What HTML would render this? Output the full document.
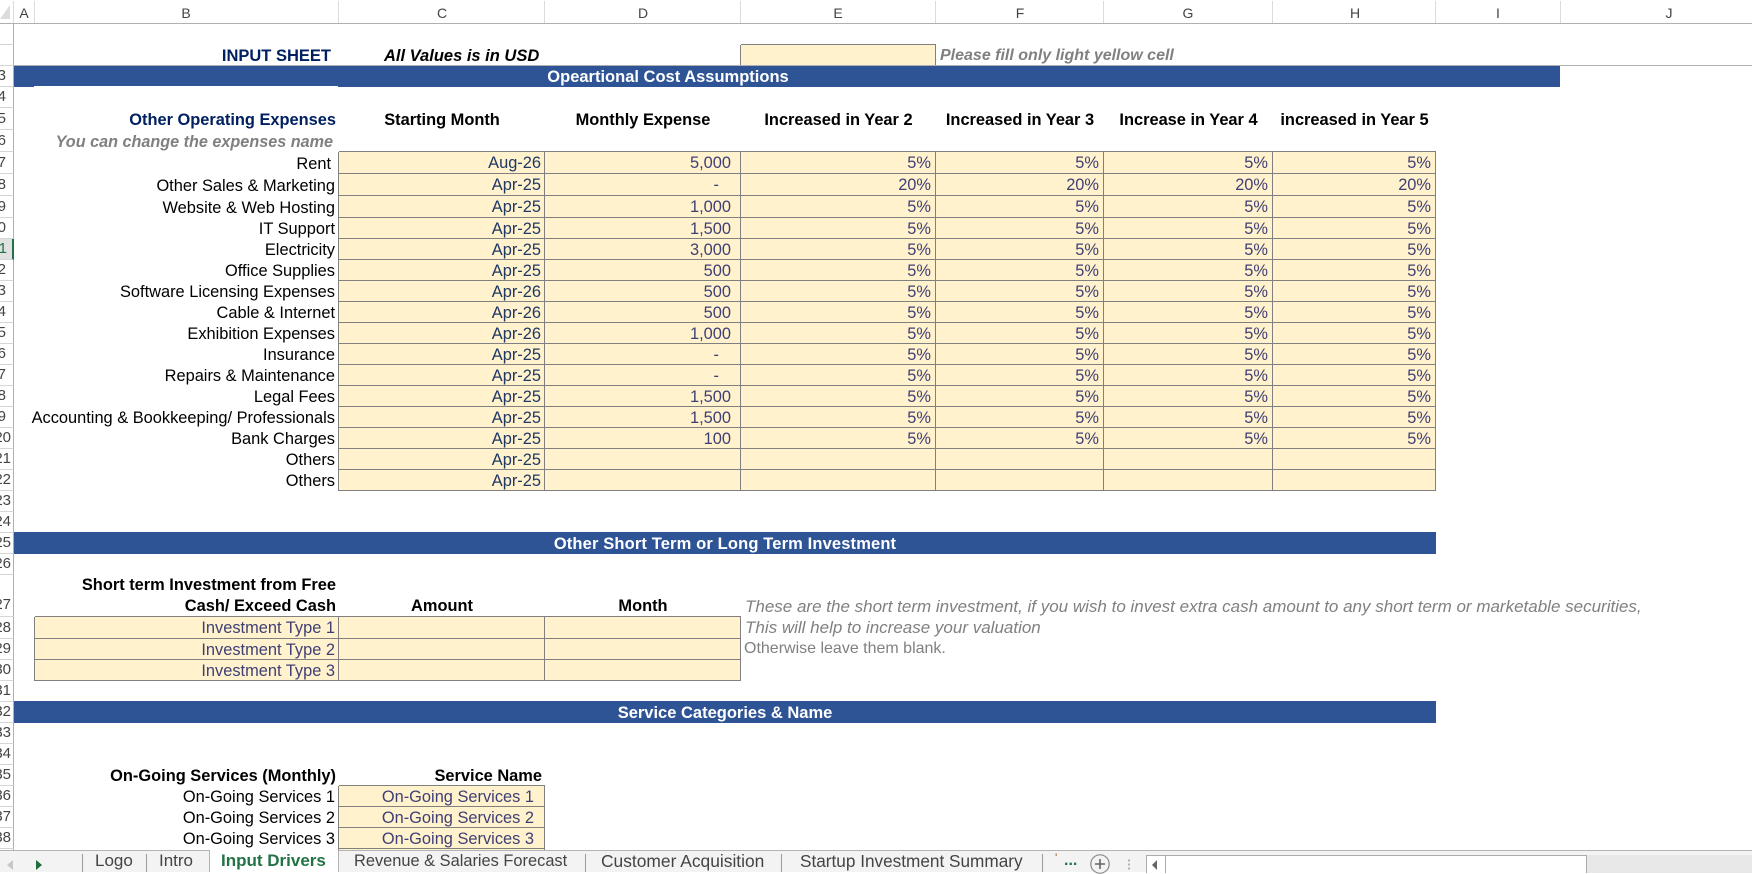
<!DOCTYPE html>
<html><head><meta charset="utf-8"><title>Input Drivers</title>
<style>
html,body{margin:0;padding:0;background:#fff}
body{width:1752px;height:872px;overflow:hidden;position:relative;font-family:"Liberation Sans",Arial,sans-serif;font-size:16.4px;color:#000}
table{position:absolute;left:0;top:24px;border-collapse:separate;border-spacing:0;table-layout:fixed;width:1752px}
td{padding:1px 3px 0 0;white-space:nowrap;box-sizing:border-box;vertical-align:middle;line-height:18px;text-align:right}
td.n{font-size:15px;color:#444;border-right:1px solid #b0b0b0;border-bottom:1px solid #d6d6d6;padding-right:8px;padding-top:0;overflow:hidden;direction:rtl}
td.m{padding-right:3px}
td.y{background:#fff2cc;border-right:1px solid #808080;border-bottom:1px solid #808080;color:#3f3f76}
td.d{color:#1f3864}
td.v{padding-right:9px}
td.p{padding-right:4px}
td.r{border-right:1px solid #808080}
td.t{border-bottom:1px solid #808080}
td.c{text-align:center;padding-right:0}
td.w{padding-top:0;line-height:20.5px;vertical-align:bottom}
.a{position:absolute;white-space:nowrap}
.bar{position:absolute;background:#2f5496}
.ttl{position:absolute;color:#fff;font-weight:bold;white-space:nowrap;transform:translateX(-50%);line-height:22px;padding-top:1px;font-size:16.5px}
.note{position:absolute;white-space:nowrap;color:#808080;line-height:18px;font-size:17px}
#ch{position:absolute;left:0;top:0;width:1752px;height:23px;background:#fff;border-bottom:1px solid #b0b0b0;box-sizing:content-box;z-index:3}
#ch span{position:absolute;top:4px;font-size:14px;color:#444;line-height:18px;transform:translateX(-50%)}
#ch i{position:absolute;top:1px;width:1px;height:22px;background:#dcdcdc}
#tabs{position:absolute;left:0;top:850px;width:1752px;height:22px;background:#f3f3f3;border-top:1px solid #b3b3b3;box-sizing:border-box;z-index:4;font-size:17px;color:#444;line-height:20px}
#tabs span{position:absolute;top:0;white-space:nowrap}
#tabs i{position:absolute;top:3px;width:1px;height:18px;background:#9a9a9a}
</style></head><body>
<div id="ch">
<svg style="position:absolute;left:0;top:4px" width="11" height="17"><path d="M10 1V15H0Z" fill="#dcdcdc"/></svg>
<i style="left:13px"></i><i style="left:34px"></i><i style="left:338px"></i><i style="left:544px"></i><i style="left:740px"></i><i style="left:935px"></i><i style="left:1103px"></i><i style="left:1272px"></i><i style="left:1435px"></i><i style="left:1560px"></i>
<span style="left:24px">A</span><span style="left:186px">B</span><span style="left:442px">C</span><span style="left:643px">D</span><span style="left:838px">E</span><span style="left:1020px">F</span><span style="left:1188px">G</span><span style="left:1355px">H</span><span style="left:1498px">I</span><span style="left:1669px">J</span>
</div>
<table>
<colgroup><col style="width:14px"><col style="width:21px"><col style="width:304px"><col style="width:206px"><col style="width:196px"><col style="width:195px"><col style="width:168px"><col style="width:169px"><col style="width:163px"><col style="width:124px"><col style="width:192px"></colgroup>
<tr style="height:21px"><td class="n"></td><td></td><td></td><td></td><td></td><td class="t"></td><td></td><td></td><td></td><td></td><td></td></tr>
<tr style="height:21px"><td class="n"></td><td></td><td style="padding-right:8px;color:#002060;font-size:16.5px"><b>INPUT SHEET</b></td><td style="text-align:left;padding-left:45px;font-size:16.5px"><b><i>All Values is in USD</i></b></td><td class="r"></td><td class="y"></td><td style="text-align:left;padding-left:4px;color:#808080;font-size:16px"><b><i>Please fill only light yellow cell</i></b></td><td></td><td></td><td></td><td></td></tr>
<tr style="height:21px"><td class="n">3</td><td colspan="10"></td></tr>
<tr style="height:21px"><td class="n">4</td><td colspan="10"></td></tr>
<tr style="height:22px"><td class="n">5</td><td></td><td style="color:#002060"><b>Other Operating Expenses</b></td><td class="c"><b>Starting Month</b></td><td class="c"><b>Monthly Expense</b></td><td class="c"><b>Increased in Year 2</b></td><td class="c"><b>Increased in Year 3</b></td><td class="c"><b>Increase in Year 4</b></td><td class="c"><b>increased in Year 5</b></td><td></td><td></td></tr>
<tr style="height:22px"><td class="n">6</td><td></td><td style="padding-right:6px;color:#808080;font-size:16.2px"><b><i>You can change the expenses name</i></b></td><td class="t"></td><td class="t"></td><td class="t"></td><td class="t"></td><td class="t"></td><td class="t"></td><td></td><td></td></tr>
<tr style="height:22px"><td class="n">7</td><td></td><td class="r" style="padding-right:7px">Rent</td><td class="y d">Aug-26</td><td class="y v">5,000</td><td class="y p">5%</td><td class="y p">5%</td><td class="y p">5%</td><td class="y p">5%</td><td></td><td></td></tr>
<tr style="height:22px"><td class="n">8</td><td></td><td class="r">Other Sales &amp; Marketing</td><td class="y d">Apr-25</td><td class="y v" style="padding-right:21px">-</td><td class="y p">20%</td><td class="y p">20%</td><td class="y p">20%</td><td class="y p">20%</td><td></td><td></td></tr>
<tr style="height:22px"><td class="n">9</td><td></td><td class="r">Website &amp; Web Hosting</td><td class="y d">Apr-25</td><td class="y v">1,000</td><td class="y p">5%</td><td class="y p">5%</td><td class="y p">5%</td><td class="y p">5%</td><td></td><td></td></tr>
<tr style="height:21px"><td class="n">10</td><td></td><td class="r">IT Support</td><td class="y d">Apr-25</td><td class="y v">1,500</td><td class="y p">5%</td><td class="y p">5%</td><td class="y p">5%</td><td class="y p">5%</td><td></td><td></td></tr>
<tr style="height:21px"><td class="n" style="background:#e1e1e1;color:#217346;border-right:2px solid #217346;padding-right:7px">11</td><td></td><td class="r">Electricity</td><td class="y d">Apr-25</td><td class="y v">3,000</td><td class="y p">5%</td><td class="y p">5%</td><td class="y p">5%</td><td class="y p">5%</td><td></td><td></td></tr>
<tr style="height:21px"><td class="n">12</td><td></td><td class="r">Office Supplies</td><td class="y d">Apr-25</td><td class="y v">500</td><td class="y p">5%</td><td class="y p">5%</td><td class="y p">5%</td><td class="y p">5%</td><td></td><td></td></tr>
<tr style="height:21px"><td class="n">13</td><td></td><td class="r">Software Licensing Expenses</td><td class="y d">Apr-26</td><td class="y v">500</td><td class="y p">5%</td><td class="y p">5%</td><td class="y p">5%</td><td class="y p">5%</td><td></td><td></td></tr>
<tr style="height:21px"><td class="n">14</td><td></td><td class="r">Cable &amp; Internet</td><td class="y d">Apr-26</td><td class="y v">500</td><td class="y p">5%</td><td class="y p">5%</td><td class="y p">5%</td><td class="y p">5%</td><td></td><td></td></tr>
<tr style="height:21px"><td class="n">15</td><td></td><td class="r">Exhibition Expenses</td><td class="y d">Apr-26</td><td class="y v">1,000</td><td class="y p">5%</td><td class="y p">5%</td><td class="y p">5%</td><td class="y p">5%</td><td></td><td></td></tr>
<tr style="height:21px"><td class="n">16</td><td></td><td class="r">Insurance</td><td class="y d">Apr-25</td><td class="y v" style="padding-right:21px">-</td><td class="y p">5%</td><td class="y p">5%</td><td class="y p">5%</td><td class="y p">5%</td><td></td><td></td></tr>
<tr style="height:21px"><td class="n">17</td><td></td><td class="r">Repairs &amp; Maintenance</td><td class="y d">Apr-25</td><td class="y v" style="padding-right:21px">-</td><td class="y p">5%</td><td class="y p">5%</td><td class="y p">5%</td><td class="y p">5%</td><td></td><td></td></tr>
<tr style="height:21px"><td class="n">18</td><td></td><td class="r">Legal Fees</td><td class="y d">Apr-25</td><td class="y v">1,500</td><td class="y p">5%</td><td class="y p">5%</td><td class="y p">5%</td><td class="y p">5%</td><td></td><td></td></tr>
<tr style="height:21px"><td class="n">19</td><td></td><td class="r"><span style="display:inline-block;margin-left:-14px">Accounting &amp; Bookkeeping/ Professionals</span></td><td class="y d">Apr-25</td><td class="y v">1,500</td><td class="y p">5%</td><td class="y p">5%</td><td class="y p">5%</td><td class="y p">5%</td><td></td><td></td></tr>
<tr style="height:21px"><td class="n m">20</td><td></td><td class="r">Bank Charges</td><td class="y d">Apr-25</td><td class="y v">100</td><td class="y p">5%</td><td class="y p">5%</td><td class="y p">5%</td><td class="y p">5%</td><td></td><td></td></tr>
<tr style="height:21px"><td class="n m">21</td><td></td><td class="r">Others</td><td class="y d">Apr-25</td><td class="y"></td><td class="y"></td><td class="y"></td><td class="y"></td><td class="y"></td><td></td><td></td></tr>
<tr style="height:21px"><td class="n m">22</td><td></td><td class="r">Others</td><td class="y d">Apr-25</td><td class="y"></td><td class="y"></td><td class="y"></td><td class="y"></td><td class="y"></td><td></td><td></td></tr>
<tr style="height:21px"><td class="n m">23</td><td colspan="10"></td></tr>
<tr style="height:21px"><td class="n m">24</td><td colspan="10"></td></tr>
<tr style="height:21px"><td class="n m">25</td><td colspan="10"></td></tr>
<tr style="height:21px"><td class="n m">26</td><td colspan="10"></td></tr>
<tr style="height:42px"><td class="n m" style="vertical-align:bottom;padding-bottom:2px">27</td><td></td><td class="t w" style="font-weight:bold">Short term Investment from Free<br>Cash/ Exceed Cash</td><td class="t c w"><b>Amount</b></td><td class="t c w"><b>Month</b></td><td colspan="6"></td></tr>
<tr style="height:22px"><td class="n m">28</td><td class="r"></td><td class="y">Investment Type 1</td><td class="y"></td><td class="y"></td><td colspan="6"></td></tr>
<tr style="height:21px"><td class="n m">29</td><td class="r"></td><td class="y">Investment Type 2</td><td class="y"></td><td class="y"></td><td colspan="6"></td></tr>
<tr style="height:21px"><td class="n m">30</td><td class="r"></td><td class="y">Investment Type 3</td><td class="y"></td><td class="y"></td><td colspan="6"></td></tr>
<tr style="height:21px"><td class="n m">31</td><td colspan="10"></td></tr>
<tr style="height:21px"><td class="n m">32</td><td colspan="10"></td></tr>
<tr style="height:21px"><td class="n m">33</td><td colspan="10"></td></tr>
<tr style="height:21px"><td class="n m">34</td><td colspan="10"></td></tr>
<tr style="height:21px"><td class="n m">35</td><td></td><td><b>On-Going Services (Monthly)</b></td><td class="t"><b>Service Name</b></td><td colspan="7"></td></tr>
<tr style="height:21px"><td class="n m">36</td><td></td><td class="r">On-Going Services 1</td><td class="y" style="padding-right:10px">On-Going Services 1</td><td colspan="7"></td></tr>
<tr style="height:21px"><td class="n m">37</td><td></td><td class="r">On-Going Services 2</td><td class="y" style="padding-right:10px">On-Going Services 2</td><td colspan="7"></td></tr>
<tr style="height:21px"><td class="n m">38</td><td></td><td class="r">On-Going Services 3</td><td class="y" style="padding-right:10px">On-Going Services 3</td><td colspan="7"></td></tr>
<tr style="height:21px"><td class="n m">39</td><td></td><td class="r"></td><td class="y"></td><td colspan="7"></td></tr>
</table>
<div class="a" style="left:14px;top:65px;width:1738px;height:1px;background:#b0b0b0"></div>
<div class="bar" style="left:14px;top:66px;width:1546px;height:21px"></div>
<div class="a" style="left:34px;top:86px;width:304px;height:1px;background:#fff"></div>
<div class="ttl" style="left:668px;top:66px;line-height:21px">Opeartional Cost Assumptions</div>
<div class="bar" style="left:14px;top:532px;width:1422px;height:22px"></div>
<div class="ttl" style="left:725px;top:532px;letter-spacing:.14px">Other Short Term or Long Term Investment</div>
<div class="bar" style="left:14px;top:701px;width:1422px;height:22px"></div>
<div class="ttl" style="left:725px;top:701px">Service Categories &amp; Name</div>
<div class="note" style="left:745px;top:598px"><i>These are the short term investment, if you wish to invest extra cash amount to any short term or marketable securities,</i></div>
<div class="note" style="left:745px;top:619px"><i>This will help to increase your valuation</i></div>
<div class="note" style="left:744px;top:640px;font-size:16px">Otherwise leave them blank.</div>
<div id="tabs">
<svg style="position:absolute;left:6px;top:8px" width="8" height="12"><path d="M7 1V11L1 6Z" fill="#c8c8c8"/></svg>
<svg style="position:absolute;left:35px;top:8px" width="8" height="12"><path d="M1 1V11L7 6Z" fill="#1e6b3c"/></svg>
<i style="left:82px"></i><i style="left:146px"></i>
<div style="position:absolute;left:209px;top:-1px;width:130px;height:22px;background:#fff;border-left:1px solid #b3b3b3;border-right:1px solid #b3b3b3;box-sizing:border-box"></div>
<span style="left:95px">Logo</span><span style="left:159px">Intro</span>
<span style="left:221px;color:#217346;font-weight:bold">Input Drivers</span>
<span style="left:354px;font-size:16.4px">Revenue &amp; Salaries Forecast</span><i style="left:585px"></i>
<span style="left:601px;font-size:17.4px">Customer Acquisition</span><i style="left:781px"></i>
<span style="left:800px;font-size:17.2px">Startup Investment Summary</span><i style="left:1042px"></i>
<span style="left:1055px;top:1px;color:#9a5a10;font-size:12px;line-height:12px">'</span>
<span style="left:1064px;top:0;color:#217346;font-size:16px;font-weight:bold">...</span>
<svg style="position:absolute;left:1090px;top:3px" width="20" height="20"><circle cx="10" cy="10" r="9.2" fill="none" stroke="#8a8a8a" stroke-width="1.2"/><path d="M10 5V15M5 10H15" stroke="#666" stroke-width="1.6"/></svg>
<svg style="position:absolute;left:1127px;top:8px" width="4" height="12"><path d="M1 1.5H3M1 5.5H3M1 9.5H3" stroke="#b0b0b0" stroke-width="2"/></svg>
<div style="position:absolute;left:1146px;top:4px;width:441px;height:18px;background:#fff;border:1px solid #ababab;border-bottom:0;box-sizing:border-box"></div>
<div style="position:absolute;left:1165px;top:4px;width:1px;height:18px;background:#ababab"></div>
<svg style="position:absolute;left:1151px;top:8px" width="8" height="12"><path d="M6 1V11L1 6Z" fill="#666"/></svg>
<div style="position:absolute;left:1587px;top:4px;width:165px;height:18px;background:#e8e8e8"></div>
</div>
</body></html>
